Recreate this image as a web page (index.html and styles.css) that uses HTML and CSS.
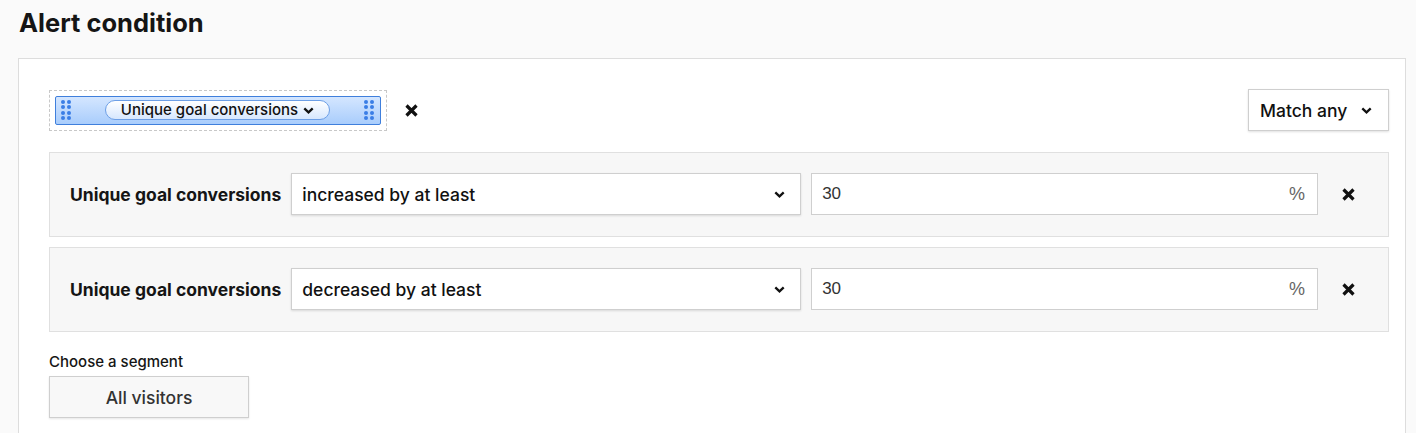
FILE: index.html
```html
<!DOCTYPE html>
<html>
<head>
<meta charset="utf-8">
<link rel="stylesheet" href="styles.css">
</head>
<body>
<h1 class="title">Alert condition</h1>
<div class="panel">
  <div class="head">
    <div class="drop">
      <div class="chip">
        <span class="grip"><i></i><i></i><i></i><i></i><i></i><i></i><i></i><i></i></span>
        <span class="pill">Unique goal conversions
          <svg class="chev-s" width="11" height="7" viewBox="0 0 11 7"><polyline points="1.3,1.3 5.5,5.3 9.7,1.3" fill="none" stroke="#111" stroke-width="2.3"/></svg>
        </span>
        <span class="grip"><i></i><i></i><i></i><i></i><i></i><i></i><i></i><i></i></span>
      </div>
    </div>
    <span class="xbtn small">
      <svg width="13" height="13" viewBox="0 0 13 13"><path d="M1.5 1.5 L11.5 11.5 M11.5 1.5 L1.5 11.5" stroke="#111" stroke-width="3.2"/></svg>
    </span>
    <div class="spacer"></div>
    <div class="match">Match any
      <svg width="11" height="7" viewBox="0 0 11 7"><polyline points="1.3,1.3 5.5,5.3 9.7,1.3" fill="none" stroke="#111" stroke-width="2.3"/></svg>
    </div>
  </div>

  <div class="row">
    <span class="label">Unique goal conversions</span>
    <div class="select">increased by at least
      <svg width="11" height="7" viewBox="0 0 11 7"><polyline points="1.3,1.3 5.5,5.3 9.7,1.3" fill="none" stroke="#111" stroke-width="2.3"/></svg>
    </div>
    <div class="input"><span>30</span><span class="pct">%</span></div>
    <span class="xbtn">
      <svg width="13" height="13" viewBox="0 0 13 13"><path d="M1.5 1.5 L11.5 11.5 M11.5 1.5 L1.5 11.5" stroke="#111" stroke-width="3.2"/></svg>
    </span>
  </div>

  <div class="row">
    <span class="label">Unique goal conversions</span>
    <div class="select">decreased by at least
      <svg width="11" height="7" viewBox="0 0 11 7"><polyline points="1.3,1.3 5.5,5.3 9.7,1.3" fill="none" stroke="#111" stroke-width="2.3"/></svg>
    </div>
    <div class="input"><span>30</span><span class="pct">%</span></div>
    <span class="xbtn">
      <svg width="13" height="13" viewBox="0 0 13 13"><path d="M1.5 1.5 L11.5 11.5 M11.5 1.5 L1.5 11.5" stroke="#111" stroke-width="3.2"/></svg>
    </span>
  </div>

  <div class="seg-label">Choose a segment</div>
  <div class="seg-btn">All visitors</div>
</div>
</body>
</html>
```

FILE: styles.css
```css
html, body {
  margin: 0;
  padding: 0;
  background: #fafafa;
  font-family: Inter, "Noto Sans", sans-serif;
  color: #111;
  overflow: hidden;
}
.title {
  margin: 0;
  padding: 8px 0 0 19px;
  height: 58px;
  box-sizing: border-box;
  font-size: 25.5px;
  font-weight: 700;
  line-height: 30px;
  color: #151515;
}
.panel {
  margin: 0 10px 0 18px;
  background: #fff;
  border: 1px solid #ddd;
  padding: 30px 16px 40px 30px;
}
.head {
  display: flex;
  align-items: center;
  height: 42px;
  margin-bottom: 21px;
}
.drop {
  border: 1px dashed #c8c8c8;
  padding: 5px;
  width: 326px;
  height: 29px;
}
.chip {
  box-sizing: border-box;
  height: 29px;
  border: 1px solid #3f7fdc;
  border-radius: 2px;
  background: linear-gradient(#d4e6ff, #a9cdfc);
  display: flex;
  align-items: center;
  justify-content: space-between;
  padding: 0 6px 0 5px;
}
.grip {
  display: grid;
  grid-template-columns: 4px 4px;
  grid-auto-rows: 4px;
  column-gap: 2px;
  row-gap: 1.5px;
}
.grip i {
  display: block;
  width: 4px;
  height: 4px;
  border-radius: 50%;
  background: #3a7ee6;
}
.pill {
  box-sizing: border-box;
  height: 20px;
  width: 225px;
  border: 1px solid #6d9fe6;
  border-radius: 10px;
  background: linear-gradient(#ffffff, #d6e7fe);
  font-size: 15px;
  font-weight: 500;
  line-height: 18px;
  display: flex;
  align-items: center;
  justify-content: center;
  gap: 5px;
  color: #111;
}
.chev-s { margin-top: 1px; }
.xbtn {
  width: 40px;
  display: flex;
  justify-content: center;
  align-items: center;
}
.xbtn.small { width: 36px; margin-left: 6px; }
.spacer { flex: 1; }
.match {
  box-sizing: border-box;
  width: 141px;
  height: 42px;
  background: #fff;
  border: 1px solid #cfcfcf;
  box-shadow: 0 1px 2px rgba(0,0,0,0.12);
  display: flex;
  align-items: center;
  justify-content: space-between;
  padding: 0 16px 0 11px;
  font-size: 17.5px;
  font-weight: 500;
}
.row {
  display: flex;
  align-items: center;
  gap: 10px;
  background: #f7f7f7;
  border: 1px solid #e0e0e0;
  padding: 20px 20px 21px 20px;
  margin-bottom: 10px;
}
.label {
  flex: none;
  font-size: 17.5px;
  font-weight: 700;
  color: #151515;
}
.select, .input {
  flex: 1;
  box-sizing: border-box;
  height: 42px;
  background: #fff;
  border: 1px solid #cfcfcf;
  display: flex;
  align-items: center;
  justify-content: space-between;
}
.select {
  padding: 0 15px 0 10px;
  font-size: 17.5px;
  font-weight: 500;
  box-shadow: 0 1px 2px rgba(0,0,0,0.12);
}
.input {
  padding: 0 12px 0 10px;
  font-family: "Liberation Sans", Arial, sans-serif;
  font-size: 17px;
  color: #333;
}
.pct { color: #666; font-size: 18px; }
.seg-label {
  margin-top: 21px;
  font-size: 15px;
  font-weight: 500;
  line-height: 18px;
  color: #151515;
  margin-bottom: 5px;
}
.seg-btn {
  box-sizing: border-box;
  width: 200px;
  height: 42px;
  background: #f8f8f8;
  border: 1px solid #cfcfcf;
  box-shadow: 0 1px 2px rgba(0,0,0,0.1);
  display: flex;
  align-items: center;
  justify-content: center;
  font-size: 17.5px;
  font-weight: 500;
  color: #333;
}
```
